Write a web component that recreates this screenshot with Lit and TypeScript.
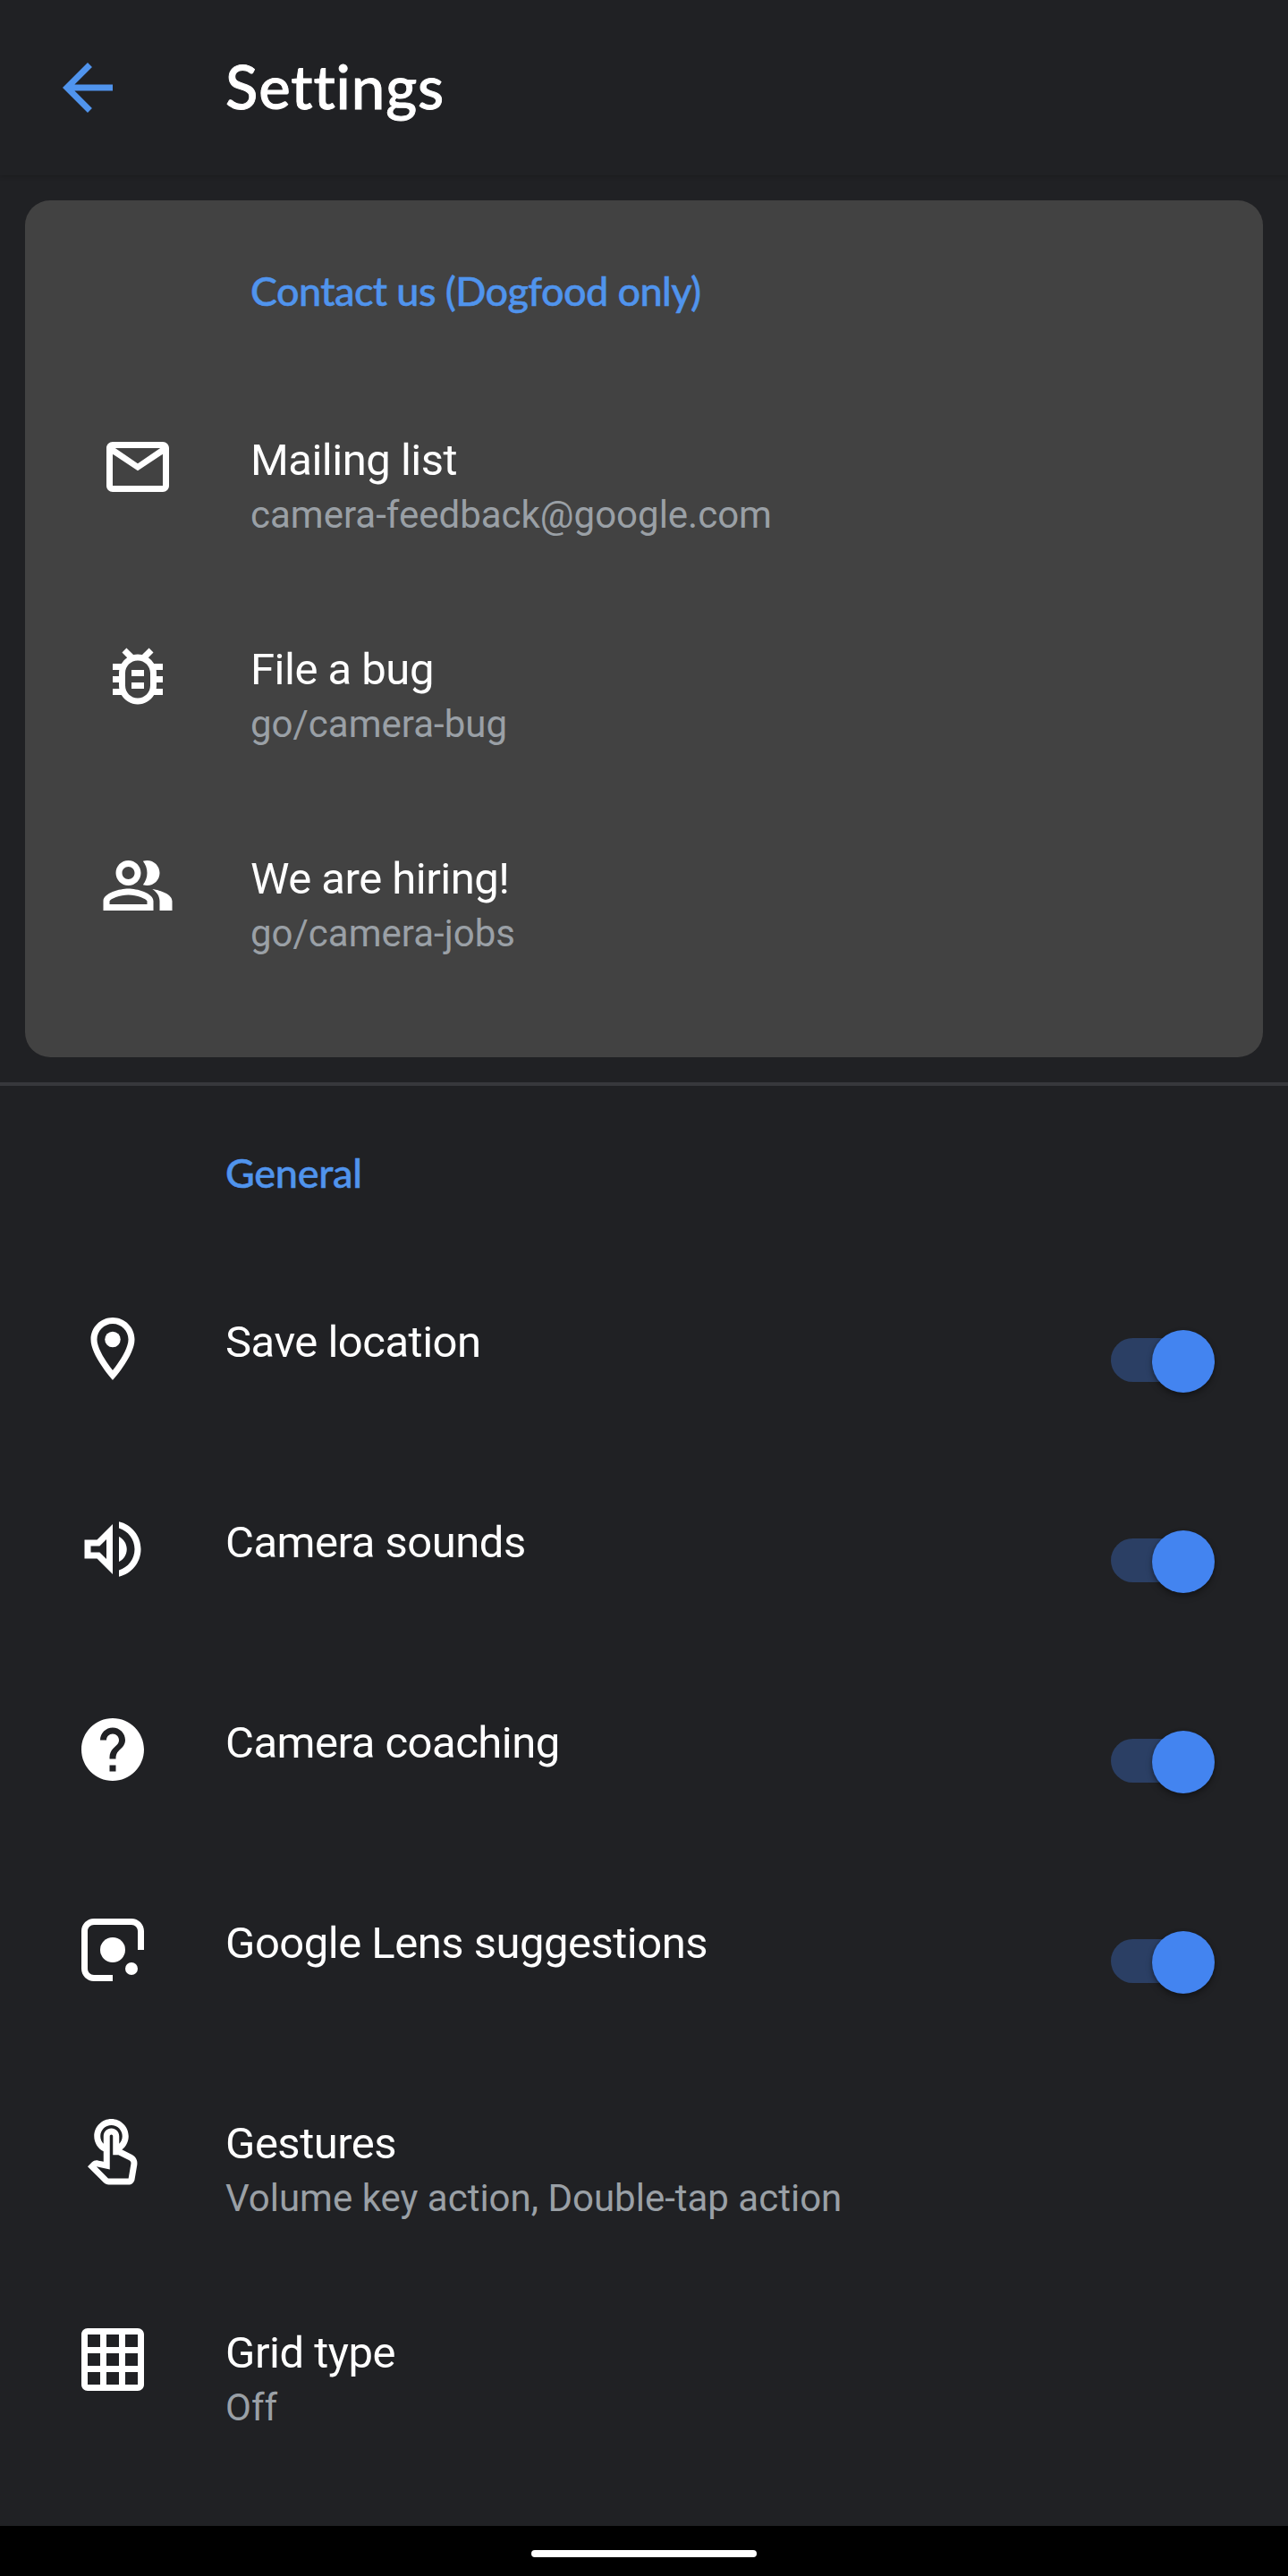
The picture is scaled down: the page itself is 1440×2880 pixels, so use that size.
import { LitElement, html, css, svg, nothing, type SVGTemplateResult } from "lit";
import { customElement, property } from "lit/decorators.js";

const icons: Record<string, SVGTemplateResult> = {
  back: svg`<path d="M20 11H7.83l5.59-5.59L12 4l-8 8 8 8 1.41-1.41L7.83 13H20v-2z"/>`,
  mail: svg`<path fill-rule="evenodd" d="M20 4H4c-1.1 0-2 .9-2 2v12c0 1.1.9 2 2 2h16c1.1 0 2-.9 2-2V6c0-1.1-.9-2-2-2zm-.8 2L12 10.9 4.8 6h14.4zM4 18V7.9l8 5.3 8-5.3V18H4z"/>`,
  bug: svg`<path fill-rule="evenodd" d="M20 8h-2.81c-.45-.78-1.07-1.45-1.82-1.96L17 4.41 15.59 3l-2.17 2.17C12.96 5.06 12.49 5 12 5s-.96.06-1.41.17L8.41 3 7 4.41l1.62 1.63C7.88 6.55 7.26 7.22 6.81 8H4v2h2.09c-.05.33-.09.66-.09 1v1H4v2h2v1c0 .34.04.67.09 1H4v2h2.81c1.04 1.79 2.97 3 5.19 3s4.15-1.21 5.19-3H20v-2h-2.09c.05-.33.09-.66.09-1v-1h2v-2h-2v-1c0-.34-.04-.67-.09-1H20V8zm-4 4v3c0 2.21-1.79 4-4 4s-4-1.79-4-4v-4c0-2.21 1.79-4 4-4s4 1.79 4 4v1zm-6 2h4v2h-4v-2zm0-4h4v2h-4v-2z"/>`,
  people: svg`<path fill-rule="evenodd" d="M9 12c2.21 0 4-1.79 4-4s-1.79-4-4-4-4 1.79-4 4 1.79 4 4 4zm0-6c1.1 0 2 .9 2 2s-.9 2-2 2-2-.9-2-2 .9-2 2-2zM9 13c-2.67 0-8 1.34-8 4v3h16v-3c0-2.66-5.33-4-8-4zm6 5H3v-.99C3.2 16.29 6.3 15 9 15s5.8 1.29 6 2v1zM15 12c2.21 0 4-1.79 4-4s-1.79-4-4-4c-.47 0-.91.1-1.33.24C14.5 5.27 15 6.58 15 8s-.5 2.73-1.33 3.76c.42.14.86.24 1.33.24zM16.67 13.13C18.04 14.06 19 15.32 19 17v3h4v-3c0-2.18-3.58-3.47-6.33-3.87z"/>`,
  place: svg`<path fill-rule="evenodd" d="M12 2C8.13 2 5 5.13 5 9c0 5.25 7 13 7 13s7-7.75 7-13c0-3.87-3.13-7-7-7zM7 9c0-2.76 2.24-5 5-5s5 2.24 5 5c0 2.88-2.88 7.19-5 9.88C9.92 16.21 7 11.85 7 9z"/><circle cx="12" cy="9" r="2.5"/>`,
  volume: svg`<path fill-rule="evenodd" d="M3 9v6h4l5 5V4L7 9H3zm7-.17v6.34L7.83 13H5v-2h2.83L10 8.83zM16.5 12c0-1.77-1.02-3.29-2.5-4.03v8.05c1.48-.73 2.5-2.25 2.5-4.02zM14 3.23v2.06c2.89.86 5 3.54 5 6.71s-2.11 5.85-5 6.71v2.06c4.01-.91 7-4.49 7-8.77s-2.99-7.86-7-8.77z"/>`,
  help: svg`<path fill-rule="evenodd" d="M12 2C6.48 2 2 6.48 2 12s4.48 10 10 10 10-4.48 10-10S17.52 2 12 2zm1 17h-2v-2h2v2zm2.07-7.75l-.9.92C13.45 12.9 13 13.5 13 15h-2v-.5c0-1.1.45-2.1 1.17-2.83l1.24-1.26c.37-.36.59-.86.59-1.41 0-1.1-.9-2-2-2s-2 .9-2 2H8c0-2.21 1.79-4 4-4s4 1.79 4 4c0 .88-.36 1.68-.93 2.25z"/>`,
  lens: svg`<path d="M12 20H6c-1.1 0-2-.9-2-2V6c0-1.1.9-2 2-2h12c1.1 0 2 .9 2 2v6h2V6c0-2.21-1.79-4-4-4H6C3.79 2 2 3.79 2 6v12c0 2.21 1.79 4 4 4h6v-2z"/><circle cx="12" cy="12" r="4"/><circle cx="18" cy="18" r="2"/>`,
  touch: svg`<path fill-rule="evenodd" transform="translate(0 1)" d="M18.19 12.44l-3.24-1.62c1.29-1 2.12-2.56 2.12-4.32 0-3.03-2.47-5.5-5.5-5.5s-5.5 2.47-5.5 5.5c0 2.13 1.22 3.98 3 4.89v3.26c-2.15-.46-2.02-.44-2.26-.44-.53 0-1.03.21-1.41.59L4 16.22l5.09 5.09c.43.44 1.03.69 1.65.69h6.3c.98 0 1.81-.7 1.97-1.67l.8-4.71c.22-1.3-.43-2.58-1.62-3.18zm-.35 2.85l-.8 4.71h-6.3c-.09 0-.17-.04-.24-.1l-3.68-3.68 4.25.89V6.5c0-.28.22-.5.5-.5s.5.22.5.5v6h1.76l3.46 1.73c.4.2.62.63.55 1.06zM8.07 6.5c0-1.93 1.57-3.5 3.5-3.5s3.5 1.57 3.5 3.5c0 .95-.38 1.81-1 2.44V6.5c0-1.38-1.12-2.5-2.5-2.5s-2.5 1.12-2.5 2.5v2.44c-.62-.63-1-1.49-1-2.44z"/>`,
  grid: svg`<path fill-rule="evenodd" d="M4 2h16c1.1 0 2 .9 2 2v16c0 1.1-.9 2-2 2H4c-1.1 0-2-.9-2-2V4c0-1.1.9-2 2-2zM4 4v4h4V4zm6 0v4h4V4zm6 0v4h4V4zM4 10v4h4v-4zm6 0v4h4v-4zm6 0v4h4v-4zM4 16v4h4v-4zm6 0v4h4v-4zm6 0v4h4v-4z"/>`,
};

const drawIcon = (name: string) =>
  html`<svg class="icon" viewBox="0 0 24 24" fill="currentColor" aria-hidden="true">${icons[name]}</svg>`;

interface Setting {
  icon: string;
  title: string;
  summary?: string;
  toggle?: boolean;
}

const contact: Setting[] = [
  { icon: "mail", title: "Mailing list", summary: "camera-feedback@google.com" },
  { icon: "bug", title: "File a bug", summary: "go/camera-bug" },
  { icon: "people", title: "We are hiring!", summary: "go/camera-jobs" },
];

const general: Setting[] = [
  { icon: "place", title: "Save location", toggle: true },
  { icon: "volume", title: "Camera sounds", toggle: true },
  { icon: "help", title: "Camera coaching", toggle: true },
  { icon: "lens", title: "Google Lens suggestions", toggle: true },
  { icon: "touch", title: "Gestures", summary: "Volume key action, Double-tap action" },
  { icon: "grid", title: "Grid type", summary: "Off" },
];

@customElement("settings-switch")
export class SettingsSwitch extends LitElement {
  static styles = css`
    :host {
      display: grid;
      align-items: center;
      width: 116px;
      height: 71px;
    }
    .track,
    .thumb {
      grid-area: 1 / 1;
    }
    .track {
      width: 112px;
      height: 49px;
      margin-bottom: 2px;
      border-radius: 25px;
      background: #2b3f64;
    }
    .thumb {
      justify-self: end;
      width: 70px;
      height: 70px;
      border-radius: 50%;
      background: #4384f0;
      box-shadow: 0 4px 7px rgba(0, 0, 0, 0.34), 0 0 3px rgba(0, 0, 0, 0.2);
    }
  `;

  render() {
    return html`<div class="track"></div><div class="thumb"></div>`;
  }
}

@customElement("settings-row")
export class SettingsRow extends LitElement {
  @property({ attribute: false }) item!: Setting;

  static styles = css`
    :host {
      display: block;
    }
    .row {
      display: flex;
      align-items: flex-start;
      height: 224px;
      padding: 0 82px 0 84px;
      box-sizing: border-box;
      color: #fff;
    }
    .tall {
      height: 234px;
    }
    .icon {
      width: 84px;
      height: 84px;
      margin-right: 84px;
      flex: none;
    }
    .text {
      flex: 1;
      padding-top: 6px;
    }
    .title {
      font-size: 49px;
      line-height: 57px;
      letter-spacing: -0.5px;
      white-space: nowrap;
    }
    .summary {
      margin-top: 8px;
      font-size: 42px;
      line-height: 49px;
      color: #9aa0a6;
      white-space: nowrap;
    }
    .switch {
      margin-top: 20px;
    }
  `;

  render() {
    const { icon, title, summary, toggle } = this.item;
    return html`
      <div class="row ${summary ? "tall" : ""}">
        ${drawIcon(icon)}
        <div class="text">
          <div class="title">${title}</div>
          ${summary ? html`<div class="summary">${summary}</div>` : nothing}
        </div>
        ${toggle ? html`<settings-switch class="switch"></settings-switch>` : nothing}
      </div>
    `;
  }
}

@customElement("app-root")
export class AppRoot extends LitElement {
  static styles = css`
    :host {
      display: flex;
      flex-direction: column;
      width: 1440px;
      height: 2880px;
      overflow: hidden;
      background: #202124;
      font-family: Roboto, sans-serif;
    }
    .bar {
      display: flex;
      align-items: center;
      flex: none;
      height: 196px;
      padding-left: 56px;
      box-shadow: 0 1px 5px rgba(0, 0, 0, 0.2);
      color: #5094ed;
    }
    .icon {
      width: 84px;
      height: 84px;
    }
    .heading {
      margin: 0 0 5px 112px;
      font: 500 67px/80px Lato, sans-serif;
      letter-spacing: 0.9px;
      color: #fff;
      -webkit-text-stroke: 0.9px #fff;
    }
    .card {
      flex: none;
      height: 958px;
      margin: 28px 28px 0;
      border-radius: 28px;
      background: #424242;
    }
    .section {
      margin: 0;
      padding: 73px 0 0 252px;
      height: 183px;
      font: 500 45px/56px Lato, sans-serif;
      letter-spacing: -0.58px;
      color: #5094ed;
      -webkit-text-stroke: 0.5px #5094ed;
    }
    .divider {
      flex: none;
      height: 4px;
      margin-top: 28px;
      background: #37383c;
    }
    .general {
      flex: 1;
      min-height: 0;
    }
    .general .section {
      padding-top: 69px;
      letter-spacing: -0.3px;
    }
    .nav {
      display: flex;
      justify-content: center;
      flex: none;
      height: 29px;
      padding-top: 27px;
      background: #000;
    }
    .pill {
      width: 252px;
      height: 8px;
      border-radius: 4px;
      background: #fff;
    }
  `;

  render() {
    return html`
      <header class="bar">
        ${drawIcon("back")}
        <h1 class="heading">Settings</h1>
      </header>
      <section class="card">
        <h2 class="section">Contact us (Dogfood only)</h2>
        ${contact.map((item) => html`<settings-row .item=${item}></settings-row>`)}
      </section>
      <div class="divider"></div>
      <section class="general">
        <h2 class="section">General</h2>
        ${general.map((item) => html`<settings-row .item=${item}></settings-row>`)}
      </section>
      <footer class="nav"><div class="pill"></div></footer>
    `;
  }
}
